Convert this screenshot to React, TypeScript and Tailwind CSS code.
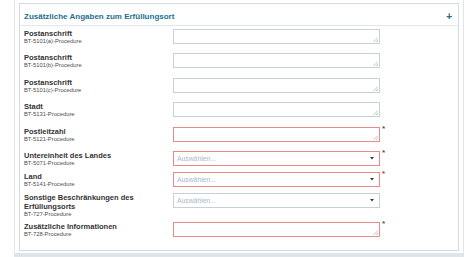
import React from "react";

type Field = {
  label: string;
  code: string;
  kind: "text" | "select";
  invalid?: boolean;
  mark?: "info" | "required";
  height: string;
};

const fields: Field[] = [
  { label: "Postanschrift", code: "BT-5101(a)-Procedure", kind: "text", height: "h-[24px]" },
  { label: "Postanschrift", code: "BT-5101(b)-Procedure", kind: "text", height: "h-[25px]" },
  { label: "Postanschrift", code: "BT-5101(c)-Procedure", kind: "text", height: "h-[24px]" },
  { label: "Stadt", code: "BT-5131-Procedure", kind: "text", height: "h-[25px]" },
  { label: "Postleitzahl", code: "BT-5121-Procedure", kind: "text", invalid: true, mark: "info", height: "h-[24px]" },
  { label: "Untereinheit des Landes", code: "BT-5071-Procedure", kind: "select", invalid: true, mark: "info", height: "h-[21px]" },
  { label: "Land", code: "BT-5141-Procedure", kind: "select", invalid: true, mark: "required", height: "h-[21px]" },
  { label: "Sonstige Beschränkungen des Erfüllungsorts", code: "BT-727-Procedure", kind: "select", height: "h-[29px]" },
  { label: "Zusätzliche Informationen", code: "BT-728-Procedure", kind: "text", invalid: true, mark: "info", height: "h-[20px]" },
];

function Grip() {
  return (
    <svg className="absolute bottom-[1px] right-[1px]" width="5" height="5" viewBox="0 0 5 5">
      <path d="M5 0.5 L0.5 5 M5 3 L3 5" stroke="#a9b3ba" strokeWidth="0.8" fill="none" />
    </svg>
  );
}

function Control({ field }: { field: Field }) {
  const border = field.invalid ? "border-[#ea8a85]" : "border-[#c5d1d9]";
  if (field.kind === "text") {
    return (
      <div className={`relative h-[15px] w-[207px] border bg-white ${border}`}>
        <Grip />
      </div>
    );
  }
  return (
    <div className={`flex h-[15px] w-[207px] items-center justify-between border bg-white pl-[3px] pr-[5px] ${border}`}>
      <span className="text-[6.8px] leading-[8px] text-[#a7b9ca]">Auswählen...</span>
      <svg width="4" height="3" viewBox="0 0 4 3">
        <path d="M0 0 H4 L2 2.6 Z" fill="#333" />
      </svg>
    </div>
  );
}

export default function App() {
  return (
    <div className="h-[257px] w-[474px] overflow-hidden bg-white font-['Liberation_Sans',Arial,sans-serif]">
      <div className="ml-[14px] w-[450px] border-x border-b-[4px] border-[#dfe5e8] px-[4px] pt-[3px] pb-[2px]">
        <div className="h-[248px] border border-[#d3dbe0]">
          <div className="flex items-center justify-between border-b border-[#e1e7eb] pl-[4px] pr-[6px] pt-[8px] pb-[3px]">
            <span className="text-[8px] font-bold leading-[10px] text-[#23708e]">
              Zusätzliche Angaben zum Erfüllungsort
            </span>
            <span className="text-[10px] font-bold leading-[10px] text-[#1c6a80]">+</span>
          </div>
          <div className="mt-[3px] px-[4px]">
            {fields.map((f, i) => (
              <div key={i} className={`flex items-start ${f.height}`}>
                <div className="w-[149px]">
                  <div className="text-[7.5px] font-bold leading-[9px] text-[#333]">{f.label}</div>
                  <div className="text-[5.8px] leading-[6px] text-[#4d4d4d]">{f.code}</div>
                </div>
                <Control field={f} />
                {f.mark && (
                  <span
                    className={`-mt-[2px] ml-[2px] text-[8px] font-bold leading-[8px] ${
                      f.mark === "required" ? "text-[#d9302c]" : "text-[#36597a]"
                    }`}
                  >
                    *
                  </span>
                )}
              </div>
            ))}
          </div>
        </div>
      </div>
    </div>
  );
}
